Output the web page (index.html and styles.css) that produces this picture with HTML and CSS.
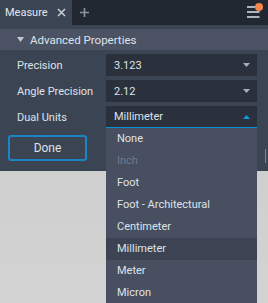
FILE: index.html
```html
<!DOCTYPE html>
<html>
<head>
<meta charset="utf-8">
<link rel="stylesheet" href="styles.css">
</head>
<body>
<div class="tabbar">
  <div class="tab">
    <span class="tab-label">Measure</span>
    <svg class="tab-close" width="9" height="9" viewBox="0 0 9 9"><path d="M1 1L8 8M8 1L1 8" stroke="#c9ced6" stroke-width="1.5"/></svg>
  </div>
  <svg class="tab-add" width="9" height="9" viewBox="0 0 9 9"><path d="M4.5 0V9M0 4.5H9" stroke="#8d95a1" stroke-width="1.6"/></svg>
  <div class="spacer"></div>
  <div class="menu">
    <svg width="13" height="14" viewBox="0 0 13 14"><path d="M0 2H8M0 7H12.5M0 12H12.5" stroke="#dde1e7" stroke-width="1.6"/></svg>
    <span class="dot"></span>
  </div>
</div>
<div class="panel">
  <div class="section-header">
    <svg class="caret" width="7" height="5" viewBox="0 0 7 5"><path d="M0 0H7L3.5 5Z" fill="#c3c8d0"/></svg>
    <span>Advanced Properties</span>
  </div>
  <div class="rows">
    <div class="row">
      <span class="label">Precision</span>
      <div class="field"><span>3.123</span><svg width="7" height="4" viewBox="0 0 7 4"><path d="M0 0H7L3.5 4Z" fill="#a9afb9"/></svg></div>
    </div>
    <div class="row">
      <span class="label">Angle Precision</span>
      <div class="field"><span>2.12</span><svg width="7" height="4" viewBox="0 0 7 4"><path d="M0 0H7L3.5 4Z" fill="#a9afb9"/></svg></div>
    </div>
    <div class="row">
      <span class="label">Dual Units</span>
      <div class="field open"><span>Millimeter</span><svg width="7" height="4" viewBox="0 0 7 4"><path d="M0 4H7L3.5 0Z" fill="#0a9be0"/></svg></div>
    </div>
  </div>
  <div class="actions">
    <button class="done">Done</button>
  </div>
  <div class="scroll-thumb"></div>
  <ul class="dropdown">
    <li>None</li>
    <li class="disabled">Inch</li>
    <li>Foot</li>
    <li>Foot - Architectural</li>
    <li>Centimeter</li>
    <li class="selected">Millimeter</li>
    <li>Meter</li>
    <li>Micron</li>
  </ul>
</div>
<div class="canvas"></div>
</body>
</html>
```
FILE: styles.css
```css
* { box-sizing: border-box; }
html, body { margin: 0; padding: 0; }
body {
  width: 268px;
  height: 303px;
  overflow: hidden;
  font-family: Roboto, "Liberation Sans", sans-serif;
  font-size: 11px;
  color: #dfe3ea;
  background: #d1d0d1;
}
.tabbar {
  height: 25px;
  background: #222831;
  display: flex;
  align-items: stretch;
}
.tab {
  width: 72px;
  background: #3b4453;
  display: flex;
  align-items: center;
  padding-left: 5px;
}
.tab-label { font-size: 11px; color: #e3e6eb; }
.tab-close { margin-left: 9px; }
.tab-add { align-self: center; margin-left: 8px; }
.spacer { flex: 1; }
.menu {
  position: relative;
  width: 21px;
  padding-top: 5px;
}
.menu svg { display: block; }
.dot {
  position: absolute;
  left: 8px;
  top: 3px;
  width: 8px;
  height: 8px;
  border-radius: 50%;
  background: #f9844a;
}
.panel {
  position: relative;
  background: #3b4453;
  padding-top: 4px;
  height: 146px;
}
.section-header {
  height: 21px;
  background: #4a5263;
  display: flex;
  align-items: center;
  padding-left: 17px;
  font-size: 11.5px;
}
.caret { margin-right: 6px; }
.rows {
  display: flex;
  flex-direction: column;
  gap: 4px;
  padding: 4px 11px 0 17px;
}
.row {
  display: flex;
  align-items: center;
  height: 22px;
}
.label { width: 89px; }
.field {
  flex: 1;
  height: 22px;
  background: #2a313c;
  display: flex;
  align-items: center;
  justify-content: space-between;
  padding: 0 7px 0 8px;
}
.field.open {
  height: 23px;
  border-bottom: 2px solid #0a8fd0;
  padding-top: 1px;
}
.actions { padding: 7px 0 0 8px; }
.done {
  width: 79px;
  height: 26px;
  background: #3b4453;
  border: 2px solid #1a86c6;
  border-radius: 3px;
  color: #dfe3ea;
  font-family: inherit;
  font-size: 12px;
  padding: 0;
}
.scroll-thumb {
  position: absolute;
  right: 2px;
  top: 124px;
  width: 1px;
  height: 14px;
  background: #7e8694;
}
.dropdown {
  position: absolute;
  left: 106px;
  top: 103px;
  width: 151px;
  margin: 0;
  padding: 0;
  list-style: none;
  background: #474f60;
  z-index: 2;
}
.dropdown li {
  height: 22px;
  line-height: 22px;
  padding-left: 11px;
}
.dropdown li.disabled { color: #747b89; }
.dropdown li.selected { background: #3c4453; }
.canvas {
  height: 132px;
  background: linear-gradient(#d0cfd0, #d4d3d4);
}
```
